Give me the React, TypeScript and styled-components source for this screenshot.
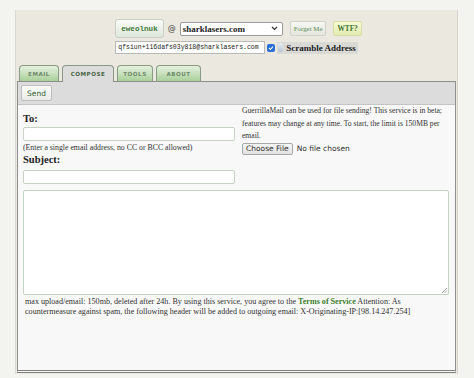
import React from "react";
import styled, { createGlobalStyle } from "styled-components";

const GlobalStyle = createGlobalStyle`
  html, body {
    margin: 0;
    padding: 0;
    background: #f3f3ef;
    font-family: "Liberation Serif", serif;
  }
`;

const Page = styled.div`
  width: 474px;
  height: 378px;
  overflow: hidden;
  padding: 10px 0 0 15px;
  box-sizing: border-box;
`;

const Panel = styled.div`
  width: 443px;
  height: 364px;
  background: #ebe8df;
  border-left: 1px solid #d8d6cf;
  border-right: 1px solid #d8d6cf;
  box-sizing: border-box;
  display: flex;
  flex-direction: column;
  align-items: center;
`;

const Header = styled.div`
  display: flex;
  flex-direction: column;
  gap: 3px;
  margin-top: 9px;
  margin-left: 4px;
`;

const Row = styled.div<{ $gap: number }>`
  display: flex;
  align-items: center;
  gap: ${(p) => p.$gap}px;
`;

const UserButton = styled.div`
  height: 17px;
  padding: 0 5px;
  display: flex;
  align-items: center;
  border: 1px solid #c9cfc4;
  border-radius: 3px;
  background: linear-gradient(#fafcf8, #dfe6da);
  font-family: "Liberation Mono", monospace;
  font-weight: bold;
  font-size: 7.6px;
  color: #3e7b3a;
`;

const At = styled.span`
  font-family: "DejaVu Sans", sans-serif;
  font-size: 8px;
  color: #444;
  margin: 0 1px;
`;

const Select = styled.div`
  width: 95px;
  height: 12px;
  background: #fff;
  border: 1px solid #9a9a9a;
  border-radius: 2px;
  display: flex;
  align-items: center;
  justify-content: space-between;
  padding: 0 4px 0 2px;
  box-sizing: content-box;
  font-weight: bold;
  font-size: 9px;
  color: #222;
`;

const ButtonGroup = styled.div`
  display: flex;
  align-items: center;
  gap: 7px;
  margin-left: 4px;
`;

const SmallButton = styled.div<{ $yellow?: boolean }>`
  height: 13px;
  padding: 0 3px;
  display: flex;
  align-items: center;
  border: 1px solid ${(p) => (p.$yellow ? "#d6dca6" : "#cfd3c8")};
  border-radius: 2px;
  background: ${(p) =>
    p.$yellow ? "linear-gradient(#f6fbd4, #e2ecb0)" : "linear-gradient(#f7f8f3, #e4e6de)"};
  font-size: ${(p) => (p.$yellow ? 7.3 : 6.9)}px;
  font-weight: ${(p) => (p.$yellow ? "bold" : "normal")};
  color: ${(p) => (p.$yellow ? "#3d7430" : "#5b8a55")};
`;

const AddressBox = styled.div`
  width: 145px;
  height: 11px;
  background: #fff;
  border: 1px solid #b9b9b9;
  padding: 0 1px 0 2px;
  display: flex;
  align-items: center;
  font-family: "Liberation Mono", monospace;
  font-size: 6.5px;
  color: #222;
  white-space: nowrap;
  overflow: hidden;
`;

const Check = styled.div`
  width: 8px;
  height: 8px;
  border-radius: 2px;
  background: #2a6fd6;
  display: flex;
  align-items: center;
  justify-content: center;
`;

const ScrambleLabel = styled.div`
  display: flex;
  align-items: center;
  gap: 3px;
  background: #d9d9d6;
  padding: 1px 2px 1px 1px;
  font-weight: bold;
  font-size: 9px;
  color: #222;
`;

const Spinner = styled.span`
  width: 5px;
  height: 9px;
  border-radius: 2px;
  background: linear-gradient(#e8eef6, #b8c4d4);
`;

const Tabs = styled.div`
  align-self: stretch;
  display: flex;
  align-items: flex-end;
  gap: 3px;
  margin: 11px 0 0 3px;
  height: 16px;
`;

const Tab = styled.div<{ $active?: boolean; $w: number }>`
  width: ${(p) => p.$w}px;
  height: ${(p) => (p.$active ? 17 : 16)}px;
  box-sizing: border-box;
  border: 1px solid #8a9a86;
  border-bottom: none;
  border-radius: 4px 4px 0 0;
  background: ${(p) =>
    p.$active ? "#dcdcdc" : "linear-gradient(#e6f1df, #a9cf9a)"};
  display: flex;
  align-items: center;
  justify-content: center;
  font-family: "DejaVu Sans", sans-serif;
  font-weight: bold;
  font-size: 5.6px;
  letter-spacing: 0.5px;
  color: ${(p) => (p.$active ? "#4a6446" : "#6f8c6a")};
  position: relative;
  z-index: ${(p) => (p.$active ? 2 : 0)};
  margin-bottom: ${(p) => (p.$active ? -1 : 0)}px;
`;

const Box = styled.div`
  align-self: stretch;
  margin: 0 1px 1px;
  flex: 1;
  border: 1px solid #8f8f8f;
  border-bottom: 3px double #808080;
  background: #f8f8f8;
  display: flex;
  flex-direction: column;
  min-height: 0;
`;

const Toolbar = styled.div`
  height: 22px;
  flex-shrink: 0;
  background: #dcdcdc;
  border-bottom: 1px solid #c4c4c4;
  display: flex;
  align-items: center;
  padding-left: 3px;
`;

const SendButton = styled.div`
  height: 14px;
  padding: 0 5px;
  display: flex;
  align-items: center;
  border: 1px solid #bdbdbd;
  border-radius: 2px;
  background: linear-gradient(#fbfbfb, #e9ebe6);
  font-family: "DejaVu Sans", sans-serif;
  font-size: 7.5px;
  color: #2f5e2c;
`;

const Form = styled.div`
  display: grid;
  grid-template-columns: 212px 212px;
  column-gap: 7px;
  padding: 0 0 0 5px;
`;

const Left = styled.div`
  display: flex;
  flex-direction: column;
`;

const FieldLabel = styled.div<{ $top: number }>`
  font-weight: bold;
  font-size: 10.5px;
  color: #222;
  margin-top: ${(p) => p.$top}px;
  height: 14px;
  line-height: 14px;
`;

const Input = styled.div<{ $top: number }>`
  height: 12px;
  background: #fff;
  border: 1px solid #c6d2c4;
  border-radius: 2px;
  margin-top: ${(p) => p.$top}px;
`;

const Hint = styled.div`
  font-size: 7.8px;
  color: #333;
  margin-top: 2px;
  line-height: 10px;
  white-space: nowrap;
`;

const Info = styled.div`
  font-size: 7.6px;
  line-height: 12.5px;
  color: #333;
`;

const FileRow = styled.div`
  display: flex;
  align-items: center;
  gap: 4px;
  font-family: "DejaVu Sans", sans-serif;
  font-size: 7.5px;
  color: #333;
`;

const FileButton = styled.div`
  height: 10px;
  padding: 0 3px;
  display: flex;
  align-items: center;
  border: 1px solid #a8a8a8;
  border-radius: 2px;
  background: linear-gradient(#f5f5f5, #e2e2e2);
`;

const TextArea = styled.div`
  margin: 6px 6px 0 5px;
  height: 103px;
  flex-shrink: 0;
  background: #fff;
  border: 1px solid #c5d3c2;
  border-radius: 2px;
  position: relative;
`;

const Grip = styled.svg`
  position: absolute;
  right: 1px;
  bottom: 1px;
`;

const Footer = styled.div`
  font-size: 8.1px;
  line-height: 10px;
  color: #333;
  padding: 2px 8px 0 7px;
`;

const Terms = styled.span`
  color: #3b7d2c;
  font-weight: bold;
`;

export default function App() {
  return (
    <>
      <GlobalStyle />
      <Page>
        <Panel>
          <Header>
            <Row $gap={3}>
              <UserButton>eweolnuk</UserButton>
              <At>@</At>
              <Select>
                sharklasers.com
                <svg width="7" height="5" viewBox="0 0 7 5">
                  <path d="M1 1l2.5 2.5L6 1" fill="none" stroke="#333" strokeWidth="1.2" />
                </svg>
              </Select>
              <ButtonGroup>
                <SmallButton>Forget Me</SmallButton>
                <SmallButton $yellow>WTF?</SmallButton>
              </ButtonGroup>
            </Row>
            <Row $gap={2}>
              <AddressBox>qfsiun+116dafs03y818@sharklasers.com</AddressBox>
              <Check>
                <svg width="6" height="6" viewBox="0 0 6 6">
                  <path d="M1 3l1.5 1.5L5 1.5" fill="none" stroke="#fff" strokeWidth="1.1" />
                </svg>
              </Check>
              <ScrambleLabel>
                <Spinner />
                Scramble Address
              </ScrambleLabel>
            </Row>
          </Header>
          <Tabs>
            <Tab $w={40}>EMAIL</Tab>
            <Tab $w={52} $active>
              COMPOSE
            </Tab>
            <Tab $w={36}>TOOLS</Tab>
            <Tab $w={45}>ABOUT</Tab>
          </Tabs>
          <Box>
            <Toolbar>
              <SendButton>Send</SendButton>
            </Toolbar>
            <Form>
              <Left>
                <FieldLabel $top={7}>To:</FieldLabel>
                <Input $top={1} />
                <Hint>(Enter a single email address, no CC or BCC allowed)</Hint>
                <FieldLabel $top={0}>Subject:</FieldLabel>
                <Input $top={3} />
              </Left>
              <div>
                <Info>
                  GuerrillaMail can be used for file sending! This service is in beta;
                  features may change at any time. To start, the limit is 150MB per
                  email.
                </Info>
                <FileRow>
                  <FileButton>Choose File</FileButton>
                  No file chosen
                </FileRow>
              </div>
            </Form>
            <TextArea>
              <Grip width="6" height="6" viewBox="0 0 6 6">
                <path d="M1 6L6 1M3.5 6L6 3.5" stroke="#888" strokeWidth="0.8" />
              </Grip>
            </TextArea>
            <Footer>
              max upload/email: 150mb, deleted after 24h. By using this service, you agree
              to the <Terms>Terms of Service</Terms> Attention: As countermeasure against
              spam, the following header will be added to outgoing email:
              X-Originating-IP:[98.14.247.254]
            </Footer>
          </Box>
        </Panel>
      </Page>
    </>
  );
}
